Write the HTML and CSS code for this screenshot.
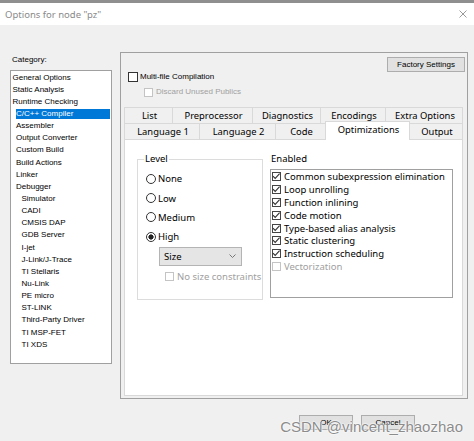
FILE: index.html
```html
<!DOCTYPE html>
<html lang="en">
<head>
  <meta charset="UTF-8">
  <title>Options for node "pz"</title>
  <link rel="stylesheet" href="styles.css">
</head>
<body>
  <div class="topstrip"></div>
  <div class="titlebar">
    <span class="title">Options for node "pz"</span>
    <svg class="close" width="8" height="8" viewBox="0 0 8 8">
      <path d="M0.5 0.5 L7.5 7.5 M7.5 0.5 L0.5 7.5" stroke="#9a9a9a" stroke-width="1" fill="none"/>
    </svg>
  </div>

  <div class="main">
    <div class="category">
      <div class="category-label">Category:</div>
      <div class="category-list">
        <div class="item">General Options</div>
        <div class="item">Static Analysis</div>
        <div class="item">Runtime Checking</div>
        <div class="item lvl2 selected">C/C++ Compiler</div>
        <div class="item lvl2">Assembler</div>
        <div class="item lvl2">Output Converter</div>
        <div class="item lvl2">Custom Build</div>
        <div class="item lvl2">Build Actions</div>
        <div class="item lvl2">Linker</div>
        <div class="item lvl2">Debugger</div>
        <div class="item lvl3">Simulator</div>
        <div class="item lvl3">CADI</div>
        <div class="item lvl3">CMSIS DAP</div>
        <div class="item lvl3">GDB Server</div>
        <div class="item lvl3">I-jet</div>
        <div class="item lvl3">J-Link/J-Trace</div>
        <div class="item lvl3">TI Stellaris</div>
        <div class="item lvl3">Nu-Link</div>
        <div class="item lvl3">PE micro</div>
        <div class="item lvl3">ST-LINK</div>
        <div class="item lvl3">Third-Party Driver</div>
        <div class="item lvl3">TI MSP-FET</div>
        <div class="item lvl3">TI XDS</div>
      </div>
    </div>

    <div class="panel">
      <div class="panel-top">
        <button class="btn factory">Factory Settings</button>
      </div>
      <div class="check-row"><span class="box"></span>Multi-file Compilation</div>
      <div class="check-row sub disabled"><span class="box"></span>Discard Unused Publics</div>

      <div class="tabs">
        <div class="tab-row row-back">
          <div class="tab">List</div>
          <div class="tab">Preprocessor</div>
          <div class="tab">Diagnostics</div>
          <div class="tab">Encodings</div>
          <div class="tab">Extra Options</div>
        </div>
        <div class="tab-row row-front">
          <div class="tab">Language 1</div>
          <div class="tab">Language 2</div>
          <div class="tab">Code</div>
          <div class="tab active">Optimizations</div>
          <div class="tab">Output</div>
        </div>

        <div class="tab-page">
          <fieldset class="level">
            <legend>Level</legend>
            <div class="radio-row"><span class="radio"></span>None</div>
            <div class="radio-row"><span class="radio"></span>Low</div>
            <div class="radio-row"><span class="radio"></span>Medium</div>
            <div class="radio-row"><span class="radio checked"></span>High</div>
            <div class="select">
              <span>Size</span>
              <svg width="7" height="4" viewBox="0 0 7 4">
                <path d="M0.5 0.5 L3.5 3.5 L6.5 0.5" stroke="#777" stroke-width="1" fill="none"/>
              </svg>
            </div>
            <div class="nsc disabled"><span class="box"></span>No size constraints</div>
          </fieldset>

          <div class="enabled">
            <div class="enabled-label">Enabled</div>
            <div class="enabled-list">
              <div class="opt"><span class="box checked"></span>Common subexpression elimination</div>
              <div class="opt"><span class="box checked"></span>Loop unrolling</div>
              <div class="opt"><span class="box checked"></span>Function inlining</div>
              <div class="opt"><span class="box checked"></span>Code motion</div>
              <div class="opt"><span class="box checked"></span>Type-based alias analysis</div>
              <div class="opt"><span class="box checked"></span>Static clustering</div>
              <div class="opt"><span class="box checked"></span>Instruction scheduling</div>
              <div class="opt disabled"><span class="box"></span>Vectorization</div>
            </div>
          </div>
        </div>
      </div>
    </div>
  </div>

  <div class="footer">
    <button class="btn">OK</button>
    <button class="btn">Cancel</button>
  </div>

  <div class="watermark">CSDN @vincent_zhaozhao</div>
</body>
</html>
```

FILE: styles.css
```css
body {
  margin: 0;
  width: 474px;
  height: 441px;
  overflow: hidden;
  position: relative;
  background: #f0f0f0;
  font-family: "Liberation Sans", Arial, sans-serif;
  font-size: 8px;
  color: #000;
}
.topstrip {
  height: 3px;
  background: #8f8f8f;
}
.titlebar {
  height: 22px;
  background: #fff;
  display: flex;
  align-items: center;
  justify-content: space-between;
  padding: 0 7px 0 5px;
}
.title {
  font-family: "Noto Sans", sans-serif;
  font-size: 9.5px;
  color: #8a8a8a;
}
.main {
  display: flex;
  gap: 8px;
  padding: 27px 0 0 10px;
}
.category {
  width: 102px;
}
.category-label {
  margin-top: 2px;
  line-height: 12px;
  padding-left: 2px;
}
.category-list {
  margin-top: 4px;
  height: 294px;
  box-sizing: border-box;
  border: 1px solid #a0a0a0;
  background: #fff;
  padding-top: 0.5px;
}
.item {
  margin: 0 1px;
  padding: 1.1px 0 1.1px 0.5px;
  line-height: 9.95px;
  white-space: nowrap;
}
.item.lvl2 {
  padding-left: 4px;
}
.item.lvl3 {
  padding-left: 9.5px;
}
.item.selected {
  background: #0078d7;
  background-clip: content-box;
  color: #fff;
}
.panel {
  width: 348px;
  box-sizing: border-box;
  border: 1px solid #a0a0a0;
  padding: 4px 0 2px 0;
}
.panel-top {
  display: flex;
  justify-content: flex-end;
  padding-right: 2px;
}
.btn {
  font-family: inherit;
  font-size: 8px;
  color: #000;
  background: #e1e1e1;
  border: 1px solid #adadad;
  height: 15px;
  padding: 0;
  box-sizing: border-box;
  width: 54px;
}
.btn.factory {
  width: 78px;
}
.box {
  display: inline-block;
  width: 10px;
  height: 10px;
  box-sizing: border-box;
  border: 1px solid #333;
  background: #fff;
  flex: none;
}
.box.checked {
  background: #fff url("data:image/svg+xml,%3Csvg xmlns='http://www.w3.org/2000/svg' width='9' height='9'%3E%3Cpath d='M1 4.2 L3.2 6.4 L7.6 1.6' stroke='%23333' stroke-width='1.1' fill='none'/%3E%3C/svg%3E") no-repeat center;
}
.disabled {
  color: #a0a0a0;
}
.disabled .box {
  border-color: #c4c4c4;
}
.check-row {
  display: flex;
  align-items: center;
  gap: 2px;
  height: 10px;
  line-height: 10px;
  margin-left: 7px;
}
.check-row.sub {
  margin-left: 23px;
  margin-top: 5px;
  gap: 3px;
}
.check-row.sub .box {
  width: 9px;
  height: 9px;
}
.tabs {
  margin: 10px 4px 0 3px;
  font-family: "Noto Sans", sans-serif;
  font-size: 9.4px;
}
.tab-row {
  display: grid;
}
.row-back {
  grid-template-columns: 48px 80px 68px 65px 1fr;
}
.row-front {
  grid-template-columns: 75px 76px 50px 85px 1fr;
}
.tab {
  border: 1px solid #d9d9d9;
  border-bottom: 0;
  border-right: 0;
  text-align: center;
  padding-left: 2px;
  line-height: 15px;
  white-space: nowrap;
}
.row-front .tab {
  line-height: 14px;
  padding-top: 1px;
}
.tab:last-child {
  border-right: 1px solid #d9d9d9;
}
.tab.active {
  background: #fff;
  margin-top: -2px;
  margin-bottom: -1px;
  border-right: 1px solid #d9d9d9;
  position: relative;
  z-index: 1;
}
.tab.active + .tab {
  border-left: 0;
}
.tab-page {
  height: 257px;
  box-sizing: border-box;
  border: 1px solid #d9d9d9;
  background: #fff;
  display: flex;
  align-items: flex-start;
  gap: 7px;
  padding: 13px 0 0 12px;
}
.level {
  margin: 0;
  padding: 4px 0 0 8px;
  width: 126px;
  height: 147px;
  box-sizing: border-box;
  border: 1px solid #dcdcdc;
  min-width: 0;
  overflow: hidden;
}
.level legend {
  padding: 0 1px;
  margin-left: -2px;
  line-height: 12px;
  font-size: 9.5px;
}
.radio-row {
  display: flex;
  align-items: center;
  gap: 2px;
  height: 19.4px;
  font-size: 9.5px;
}
.radio {
  width: 10px;
  height: 10px;
  box-sizing: border-box;
  border: 1px solid #333;
  border-radius: 50%;
  background: #fff;
  flex: none;
}
.radio.checked {
  background: radial-gradient(circle, #222 0 2.3px, #fff 2.9px);
}
.select {
  margin-left: 13px;
  width: 83px;
  height: 19px;
  box-sizing: border-box;
  background: #e5e5e5;
  border: 1px solid #b4b4b4;
  display: flex;
  align-items: center;
  justify-content: space-between;
  padding: 0 5px 0 4px;
  font-size: 9.5px;
}
.nsc {
  display: flex;
  align-items: center;
  gap: 3px;
  height: 10px;
  margin: 6px 0 0 19px;
  white-space: nowrap;
  overflow: hidden;
  font-size: 9.5px;
}
.nsc .box {
  width: 9px;
  height: 9px;
}
.enabled {
  width: 183px;
}
.enabled-label {
  line-height: 12px;
  padding-left: 1px;
  font-size: 9.5px;
}
.enabled-list {
  margin-top: 4px;
  height: 129px;
  box-sizing: border-box;
  border: 1px solid #a0a0a0;
}
.opt {
  display: flex;
  align-items: center;
  gap: 3px;
  height: 12.9px;
  padding-left: 1px;
  font-size: 9.5px;
  white-space: nowrap;
}
.opt .box {
  width: 9px;
  height: 9px;
  border-color: #444;
}
.opt.disabled .box {
  border-color: #c4c4c4;
}
.footer {
  display: flex;
  justify-content: flex-end;
  gap: 8px;
  margin-top: 16px;
  padding-right: 59px;
}
.watermark {
  position: absolute;
  right: 11px;
  top: 418px;
  font-family: "Liberation Sans", Arial, sans-serif;
  font-size: 15px;
  line-height: 17px;
  color: #8c8c8c;
  text-shadow: 0 0 1px #fff, 0 0 2px #fff, 0 0 2px #fff;
}
```
